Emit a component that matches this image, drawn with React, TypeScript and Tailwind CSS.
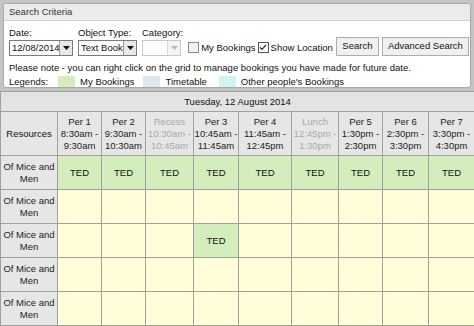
import React from "react";

const cols = [44, 44, 48, 45, 53, 47, 44, 46, 46];
const periods = [
  { n: "Per 1", a: "8:30am -", b: "9:30am" },
  { n: "Per 2", a: "9:30am -", b: "10:30am" },
  { n: "Recess", a: "10:30am -", b: "10:45am", dim: true },
  { n: "Per 3", a: "10:45am -", b: "11:45am" },
  { n: "Per 4", a: "11:45am -", b: "12:45pm" },
  { n: "Lunch", a: "12:45pm -", b: "1:30pm", dim: true },
  { n: "Per 5", a: "1:30pm -", b: "2:30pm" },
  { n: "Per 6", a: "2:30pm -", b: "3:30pm" },
  { n: "Per 7", a: "3:30pm -", b: "4:30pm" },
];

function Arrow({ disabled }: { disabled?: boolean }) {
  return (
    <span
      className={
        "flex h-full w-[13px] shrink-0 items-center justify-center border-l " +
        (disabled ? "border-[#d8d8d8] bg-[#f4f4f4]" : "border-[#9a9a9a] bg-[#e8e8e8]")
      }
    >
      <svg width="7" height="4" viewBox="0 0 7 4">
        <path d="M0 0h7L3.5 4z" fill={disabled ? "#b8b8b8" : "#111"} />
      </svg>
    </span>
  );
}

export default function App() {
  const rows = [
    Array(9).fill(true),
    Array(9).fill(false),
    [false, false, false, true, false, false, false, false, false],
    Array(9).fill(false),
    Array(9).fill(false),
  ];
  return (
    <div
      className="h-[326px] w-[474px] overflow-hidden whitespace-nowrap bg-[#c4c4c4] text-[9.5px] leading-none text-[#111]"
      style={{ fontFamily: '"Liberation Sans", Arial, sans-serif' }}
    >
      <div className="px-[3px] pt-[3px]">
        <div className="h-[85px] overflow-hidden rounded-[3px] border border-[#a9a9a9] bg-white">
          <div className="flex h-[17px] items-center border-b border-[#d0d0d0] bg-[#ececec] pl-[5px] text-[#333]">
            Search Criteria
          </div>
          <div className="pl-[5px] pt-[7px]">
            <div className="flex items-end">
              <div className="flex flex-col">
                <span className="mb-[2px]">Date:</span>
                <div className="flex h-[16px] w-[64px] items-stretch border border-[#7a7a7a] bg-white">
                  <span className="flex flex-1 items-center overflow-hidden pl-[2px]">12/08/2014</span>
                  <Arrow />
                </div>
              </div>
              <div className="ml-[5px] flex flex-col">
                <span className="mb-[2px]">Object Type:</span>
                <div className="flex h-[16px] w-[59px] items-stretch border border-[#7a7a7a] bg-white">
                  <span className="flex flex-1 items-center overflow-hidden pl-[2px]">Text Book</span>
                  <Arrow />
                </div>
              </div>
              <div className="ml-[5px] flex flex-col">
                <span className="mb-[2px]">Category:</span>
                <div className="flex h-[16px] w-[39px] items-stretch border border-[#c8c8c8] bg-white">
                  <span className="flex-1" />
                  <Arrow disabled />
                </div>
              </div>
              <div className="ml-[5px] flex h-[16px] items-center">
                <span className="h-[11px] w-[11px] shrink-0 border border-[#8a8a8a] bg-[#f0f0f0]" />
                <span className="ml-[2px]">My Bookings</span>
              </div>
              <div className="ml-[2px] flex h-[16px] items-center">
                <span className="flex h-[11px] w-[11px] shrink-0 items-center justify-center border border-[#555] bg-white">
                  <svg width="8" height="7" viewBox="0 0 8 7">
                    <path d="M1 3.5L3 5.5L7 1" stroke="#333" strokeWidth="1.2" fill="none" />
                  </svg>
                </span>
                <span className="ml-[2px]">Show Location</span>
              </div>
              <div className="ml-[3px] flex h-[19px] w-[43px] shrink-0 items-center justify-center border border-[#adadad] bg-[#f0f0f0]">
                Search
              </div>
              <div className="ml-[3px] flex h-[19px] w-[87px] shrink-0 items-center justify-center border border-[#adadad] bg-[#f0f0f0]">
                Advanced Search
              </div>
            </div>
            <div className="mt-[7px]">
              Please note - you can right click on the grid to manage bookings you have made for future date.
            </div>
            <div className="mt-[4px] flex items-center">
              <span>Legends:</span>
              <span className="ml-[10px] h-[11px] w-[17px] bg-[#d3eebb]" />
              <span className="ml-[5px]">My Bookings</span>
              <span className="ml-[9px] h-[11px] w-[17px] bg-[#dfe6ef]" />
              <span className="ml-[5px]">Timetable</span>
              <span className="ml-[12px] h-[11px] w-[17px] bg-[#cdf5f6]" />
              <span className="ml-[5px]">Other people's Bookings</span>
            </div>
          </div>
        </div>
      </div>
      <table className="mt-[3px] table-fixed border-collapse" style={{ width: 474 }}>
        <colgroup>
          <col style={{ width: 57 }} />
          {cols.map((w, i) => (
            <col key={i} style={{ width: w }} />
          ))}
        </colgroup>
        <tbody>
          <tr className="h-[20px]">
            <td colSpan={10} className="border border-[#a0a0a0] bg-[#e3e3e3] text-center">
              Tuesday, 12 August 2014
            </td>
          </tr>
          <tr className="h-[44px]">
            <td className="border border-[#a0a0a0] bg-[#e6e6e6] text-center">Resources</td>
            {periods.map((p, i) => (
              <td
                key={i}
                className={
                  "border border-[#a0a0a0] bg-[#e6e6e6] text-center leading-[12px] " +
                  (p.dim ? "text-[#a8a8a8]" : "text-[#222]")
                }
              >
                <div>{p.n}</div>
                <div>{p.a}</div>
                <div>{p.b}</div>
              </td>
            ))}
          </tr>
          {rows.map((r, ri) => (
            <tr key={ri} className="h-[34px]">
              <td className="border border-[#a0a0a0] bg-[#e6e6e6] text-center leading-[12px] text-[#222]">
                <div>Of Mice and</div>
                <div>Men</div>
              </td>
              {r.map((t, ci) => (
                <td
                  key={ci}
                  className={
                    "border border-[#a0a0a0] text-center " +
                    (t ? "bg-[#d4edbd]" : "bg-[#fffed9]")
                  }
                >
                  {t ? "TED" : ""}
                </td>
              ))}
            </tr>
          ))}
        </tbody>
      </table>
    </div>
  );
}
